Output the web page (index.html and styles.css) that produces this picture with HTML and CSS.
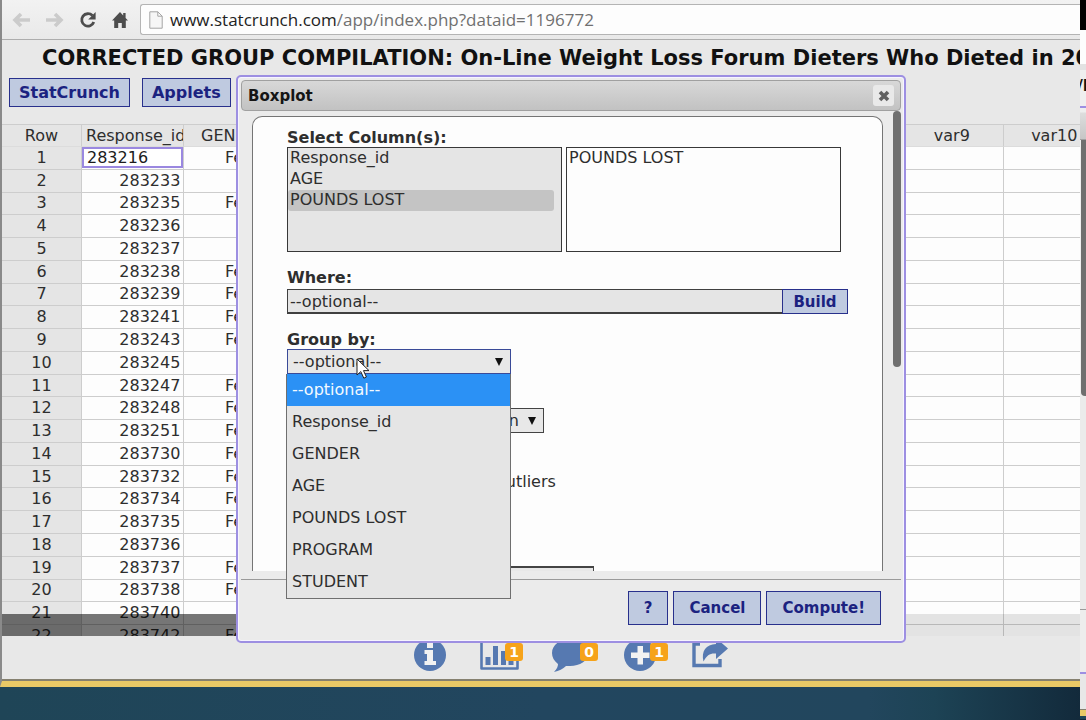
FILE: index.html
```html
<!DOCTYPE html>
<html lang="en">
<head>
<meta charset="utf-8">
<title>StatCrunch</title>
<link rel="stylesheet" href="styles.css">
</head>
<body>
<div class="window">
  <header class="toolbar">
    <button class="nav-btn" aria-label="Back"><svg width="20" height="18" viewBox="0 0 20 18"><path d="M9 3 3 9l6 6M3 9h15" fill="none" stroke="#cbcbcb" stroke-width="3.600"/></svg></button>
    <button class="nav-btn" aria-label="Forward"><svg width="20" height="18" viewBox="0 0 20 18"><path d="M11 3l6 6-6 6M17 9H2" fill="none" stroke="#cbcbcb" stroke-width="3.600"/></svg></button>
    <button class="nav-btn" aria-label="Reload"><svg width="18" height="18" viewBox="0 0 18 18"><path d="M13.4 4.6A6.2 6.2 0 1 0 14.8 11" fill="none" stroke="#4d4d4d" stroke-width="2.8"/><path d="M16.6 1v7.4H9.2z" fill="#4d4d4d"/></svg></button>
    <button class="nav-btn" aria-label="Home"><svg width="16" height="18" viewBox="0 0 16 18"><path d="M8 1 0 9.5h2.2V17h4v-5h3.6v5h4V9.5H16L13.6 7V2h-2.4v2.4z" fill="#4d4d4d"/></svg></button>
    <div class="address">
      <svg width="14" height="18" viewBox="0 0 14 18"><path d="M.8.8h8l4.4 4.4v12H.8zM8.8.8v4.4h4.4" fill="#f6f6f6" stroke="#a4a4a4"/></svg>
      <span class="url"><span class="host">www.statcrunch.com</span>/app/index.php?dataid=1196772</span>
    </div>
  </header>

  <h1 class="title">CORRECTED GROUP COMPILATION: On-Line Weight Loss Forum Dieters Who Dieted in 2012</h1>

  <nav class="menu">
    <button class="btn main">StatCrunch</button>
    <button class="btn main">Applets</button>
  </nav>

  <main class="sheet">
    <table class="grid">
      <colgroup><col class="rowcol"><col span="10"></colgroup>
      <thead><tr><th>Row</th><th class="clip">Response_id</th><th>GENDER</th><th></th><th></th><th></th><th></th><th></th><th></th><th>var9</th><th>var10</th></tr></thead>
      <tbody>
      <tr><th>1</th><td class="active"><input class="cell" aria-label="Response_id, row 1" value="283216"></td><td>Female</td><td></td><td></td><td></td><td></td><td></td><td></td><td></td><td></td></tr>
      <tr><th>2</th><td>283233</td><td></td><td></td><td></td><td></td><td></td><td></td><td></td><td></td><td></td></tr>
      <tr><th>3</th><td>283235</td><td>Female</td><td></td><td></td><td></td><td></td><td></td><td></td><td></td><td></td></tr>
      <tr><th>4</th><td>283236</td><td></td><td></td><td></td><td></td><td></td><td></td><td></td><td></td><td></td></tr>
      <tr><th>5</th><td>283237</td><td></td><td></td><td></td><td></td><td></td><td></td><td></td><td></td><td></td></tr>
      <tr><th>6</th><td>283238</td><td>Female</td><td></td><td></td><td></td><td></td><td></td><td></td><td></td><td></td></tr>
      <tr><th>7</th><td>283239</td><td>Female</td><td></td><td></td><td></td><td></td><td></td><td></td><td></td><td></td></tr>
      <tr><th>8</th><td>283241</td><td>Female</td><td></td><td></td><td></td><td></td><td></td><td></td><td></td><td></td></tr>
      <tr><th>9</th><td>283243</td><td>Female</td><td></td><td></td><td></td><td></td><td></td><td></td><td></td><td></td></tr>
      <tr><th>10</th><td>283245</td><td></td><td></td><td></td><td></td><td></td><td></td><td></td><td></td><td></td></tr>
      <tr><th>11</th><td>283247</td><td>Female</td><td></td><td></td><td></td><td></td><td></td><td></td><td></td><td></td></tr>
      <tr><th>12</th><td>283248</td><td>Female</td><td></td><td></td><td></td><td></td><td></td><td></td><td></td><td></td></tr>
      <tr><th>13</th><td>283251</td><td>Female</td><td></td><td></td><td></td><td></td><td></td><td></td><td></td><td></td></tr>
      <tr><th>14</th><td>283730</td><td>Female</td><td></td><td></td><td></td><td></td><td></td><td></td><td></td><td></td></tr>
      <tr><th>15</th><td>283732</td><td>Female</td><td></td><td></td><td></td><td></td><td></td><td></td><td></td><td></td></tr>
      <tr><th>16</th><td>283734</td><td>Female</td><td></td><td></td><td></td><td></td><td></td><td></td><td></td><td></td></tr>
      <tr><th>17</th><td>283735</td><td>Female</td><td></td><td></td><td></td><td></td><td></td><td></td><td></td><td></td></tr>
      <tr><th>18</th><td>283736</td><td></td><td></td><td></td><td></td><td></td><td></td><td></td><td></td><td></td></tr>
      <tr><th>19</th><td>283737</td><td>Female</td><td></td><td></td><td></td><td></td><td></td><td></td><td></td><td></td></tr>
      <tr><th>20</th><td>283738</td><td>Female</td><td></td><td></td><td></td><td></td><td></td><td></td><td></td><td></td></tr>
      <tr><th>21</th><td>283740</td><td></td><td></td><td></td><td></td><td></td><td></td><td></td><td></td><td></td></tr>
      <tr><th>22</th><td>283742</td><td>Female</td><td></td><td></td><td></td><td></td><td></td><td></td><td></td><td></td></tr>
      </tbody>
    </table>
    <div class="hscroll"><div class="hthumb"></div></div>
  </main>

  <footer class="dock">
    <button class="dock-btn" aria-label="Info"><svg width="40" height="36" viewBox="0 0 40 36"><circle cx="20" cy="18" r="16" fill="#5679b1"/><path d="M17 6h6v5h-6zM14.500 13H23v11h3v4H14.500v-4H17v-7h-2.500z" fill="#f2f2f2"/></svg></button>
    <button class="dock-btn" aria-label="Graphs"><svg width="40" height="36" viewBox="0 0 40 36"><path d="M1.500 2v29.500h36V2" fill="none" stroke="#5679b1" stroke-width="2.600" stroke-linejoin="round"/><path d="M5.500 20h5v8h-5zM13 9h5v19h-5zM21 14h5v14h-5zM28.500 18h5v10h-5z" fill="#5679b1"/></svg><span class="badge">1</span></button>
    <button class="dock-btn" aria-label="Comments"><svg width="40" height="36" viewBox="0 0 40 36"><path d="M20 2c10 0 18 6 18 14S30 29 20 29h-4c-3 3-7 5-12 6 3-3 4-6 4-8-4-3-6-7-6-11C2 8 10 2 20 2z" fill="#5679b1"/></svg><span class="badge far">0</span></button>
    <button class="dock-btn" aria-label="Add"><svg width="40" height="36" viewBox="0 0 40 36"><circle cx="20" cy="18" r="16" fill="#5679b1"/><path d="M17.500 9h5.500v6.500h6.500v5.500H23v6.500h-5.500V21H11v-5.500h6.500z" fill="#f2f2f2"/></svg><span class="badge far">1</span></button>
    <button class="dock-btn" aria-label="Share"><svg width="40" height="36" viewBox="0 0 40 36"><path d="M10 7H4v21.500h26V22" fill="none" stroke="#5679b1" stroke-width="3.400"/><path d="M26 1l12 10.500L26 22v-5.500c-6-.5-9 1.500-12.500 8C11 14 16 7.500 26 7z" fill="#5679b1"/></svg></button>
  </footer>

  <section class="dialog" role="dialog" aria-labelledby="dlg-title">
    <header class="dialog-bar">
      <h2 id="dlg-title" class="dialog-title">Boxplot</h2>
      <button class="close" aria-label="Close"><svg width="12" height="12" viewBox="0 0 12 12"><path d="M2 2l8 8M10 2l-8 8" stroke="#616161" stroke-width="3.600"/></svg></button>
    </header>
    <div class="dialog-body">
      <form class="panel">
        <div class="field">
          <label class="label" for="cols">Select Column(s):</label>
          <div class="lists">
            <select id="cols" class="list shaded" multiple size="5"><option>Response_id</option><option>AGE</option><option selected>POUNDS LOST</option></select>
            <select class="list" aria-label="Selected columns" multiple size="5"><option>POUNDS LOST</option></select>
          </div>
        </div>
        <div class="field">
          <label class="label" for="where">Where:</label>
          <div class="where"><input id="where" class="text" value="--optional--"><button type="button" class="btn build">Build</button></div>
        </div>
        <div class="field">
          <label class="label" for="groupby">Group by:</label>
          <select id="groupby" class="drop focus"><option>--optional--</option></select>
        </div>
        <div class="field plot"><select class="drop wide" aria-label="Plot groups"><option>Plot groups for each column</option></select></div>
        <label class="check"><input type="checkbox" class="tick">Use fences to identify outliers</label>
        <select class="drop last" aria-label="Markers"><option></option></select>
      </form>
      <div class="vtrack"><div class="vthumb"></div></div>
    </div>
    <footer class="dialog-foot">
      <button class="btn big">?</button>
      <button class="btn big">Cancel</button>
      <button class="btn big">Compute!</button>
    </footer>
    <ul class="popup" role="listbox" aria-label="Group by options">
      <li class="opt current" role="option">--optional--</li>
      <li class="opt" role="option">Response_id</li>
      <li class="opt" role="option">GENDER</li>
      <li class="opt" role="option">AGE</li>
      <li class="opt" role="option">POUNDS LOST</li>
      <li class="opt" role="option">PROGRAM</li>
      <li class="opt" role="option">STUDENT</li>
    </ul>
    <svg class="pointer" width="14" height="22" viewBox="0 0 14 22"><path d="M1 1v16l3.800-3.400 3 6.600 2.600-1.200-2.900-6.400H13z" fill="#fff" stroke="#222"/></svg>
  </section>
</div>

<aside class="edge" aria-hidden="true">
  <div class="edge-black"></div>
  <div class="edge-white"></div>
  <div class="edge-head">/l</div>
  <div class="edge-bar"></div>
  <div class="edge-thumb"></div>
  <div class="edge-body"></div>
  <div class="edge-foot"></div>
  <div class="edge-dock"></div>
  <div class="edge-gold"></div>
</aside>
</body>
</html>
```
FILE: styles.css
```css
* { box-sizing: border-box; }

body {
  margin: 0;
  min-height: 100vh;
  display: flex;
  align-items: flex-start;
  overflow: hidden;
  background: linear-gradient(90deg, #1f4557 0%, #22465f 50%, #22465d 80%, #1d4355 86%, #12293a 100%);
  color: #2e2e2e;
  font: 16px/20px "DejaVu Sans", Verdana, sans-serif;
}

button, input, select { font: inherit; color: inherit; margin: 0; }

.window {
  position: relative;
  flex: 1;
  min-width: 0;
  background: #e8e8e8;
  border-left: 2px solid #8a8a8a;
  border-bottom: 6px solid #e9c966;
  overflow: hidden;
}

/* Browser toolbar */
.toolbar {
  display: flex;
  align-items: center;
  height: 40px;
  padding-left: 10px;
  gap: 12px;
  background: linear-gradient(#f2f2f2, #e9e9e9);
  border-bottom: 1px solid #adadad;
}
.nav-btn { display: flex; padding: 0; border: 0; background: none; }
.nav-btn + .nav-btn + .nav-btn { margin-left: 3px; }
.address {
  flex: 1;
  display: flex;
  align-items: center;
  gap: 7px;
  height: 31px;
  padding-left: 8px;
  background: #fdfdfd;
  border: 1px solid #b4b4b4;
  border-right: 0;
  border-radius: 3px 0 0 3px;
}
.url { font: 17px/24px "Open Sans", "Noto Sans", sans-serif; color: #707070; }
.host { color: #222; }

/* Title and menu */
.title {
  margin: 0;
  padding: 4px 0 4px 40px;
  font-size: 21px;
  line-height: 28px;
  color: #111;
  white-space: nowrap;
  overflow: hidden;
}
.menu { display: flex; gap: 12px; padding: 2px 7px 17px; }
.btn {
  height: 29px;
  padding: 0 9px;
  border: 1px solid #28308c;
  background: #bfcae0;
  color: #1b2280;
  font-size: 15px;
  font-weight: bold;
}
.main { font-size: 16px; }

/* Data sheet */
.sheet { position: relative; height: 512px; overflow: hidden; }
.grid {
  table-layout: fixed;
  width: 1104px;
  height: 524px;
  border-collapse: separate;
  border-spacing: 0;
  line-height: 18px;
}
.rowcol { width: 80px; }
.grid thead tr { height: 23px; }
.grid tbody tr { height: 22px; }
.grid th, .grid td {
  padding: 0 3px;
  border: 0 solid #cdcdcd;
  border-width: 0 1px 1px 0;
  white-space: nowrap;
  overflow: hidden;
}
.grid th { font-weight: normal; text-align: center; background: #e5e5e5; }
.grid thead th { border-top-width: 1px; border-bottom-color: #dcdcdc; }
.grid th.clip { text-align: left; padding-left: 4px; }
.grid td { text-align: right; background: #fdfdfd; }
.grid td.active { padding: 0; }
.cell {
  display: block;
  width: 100%;
  height: 21px;
  padding: 0 3px;
  border: 2px solid #9a88e0;
  background: #fff;
  color: #1c1c1c;
}
.hscroll {
  position: absolute;
  left: 0;
  right: 0;
  bottom: 0;
  height: 22px;
  background: rgba(0, 0, 0, .1);
}
.hthumb { width: 60%; height: 100%; background: rgba(0, 0, 0, .48); }

/* Bottom icon dock */
.dock {
  display: flex;
  justify-content: center;
  height: 45px;
  padding-left: 58px;
  border-bottom: 2px solid #85806f;
}
.dock-btn { position: relative; width: 70px; height: 38px; padding: 1px 0; border: 0; background: none; }
.dock-btn svg { display: block; margin: auto; }
.badge {
  position: absolute;
  left: 40px;
  top: 7px;
  width: 18px;
  height: 18px;
  border-radius: 3px;
  background: #f6a31a;
  color: #fff;
  font-size: 14px;
  line-height: 18px;
  font-weight: bold;
}
.far { left: 45px; }

/* Boxplot dialog */
.dialog {
  position: absolute;
  left: 234px;
  top: 75px;
  width: 670px;
  border: 2px solid #9d8fe2;
  border-radius: 5px;
  background: #ebebeb;
  box-shadow: inset 0 0 0 1px #f6f4ff;
  padding: 3px;
}
.dialog-bar {
  display: flex;
  align-items: center;
  justify-content: space-between;
  height: 31px;
  padding: 0 6px;
  border: 1px solid #a0a0a0;
  border-radius: 4px;
  background: linear-gradient(#d8d8d8, #c2c2c2);
}
.dialog-title { margin: 0; font-size: 15px; color: #151515; }
.close {
  display: flex;
  align-items: center;
  justify-content: center;
  width: 21px;
  height: 21px;
  padding: 0;
  border: 0;
  border-radius: 3px;
  background: #e9e9e9;
}
.dialog-body {
  display: flex;
  gap: 10px;
  height: 469px;
  padding: 0 0 8px 11px;
  border-bottom: 1px solid #9a9a9a;
}
.panel {
  flex: 1;
  margin-top: 5px;
  padding: 12px 34px 0;
  border: 1px solid #757575;
  border-bottom: 0;
  border-radius: 10px 10px 0 0;
  background: #fdfdfd;
  overflow: hidden;
}
.vtrack { width: 8px; }
.vthumb { height: 256px; border-radius: 4px; background: #6f6f6f; }
.field { margin-bottom: 17px; }
.label { display: block; height: 18px; line-height: 18px; font-weight: bold; }
.lists { display: flex; gap: 4px; }
.list {
  width: 275px;
  height: 105px;
  padding: 0 7px 0 0;
  border: 1px solid #383838;
  border-radius: 0;
  background: #fdfdfd;
  overflow: hidden;
  outline: 0;
}
.list.shaded { background: #e5e5e5; }
.list option { height: 21px; min-height: 21px; padding: 0 2px; border-radius: 3px; line-height: 21px; }
.list option:checked { background: #c4c4c4 linear-gradient(#c4c4c4, #c4c4c4); color: #2e2e2e; }
.where { display: flex; padding-top: 2px; }
.text {
  width: 495px;
  height: 25px;
  padding: 0 2px;
  border: 1px solid #404040;
  border-right: 0;
  border-bottom-width: 2px;
  background: #e5e5e5;
}
.build { width: 66px; height: 25px; padding: 0; flex: none; }
.drop {
  display: block;
  appearance: none;
  width: 224px;
  height: 25px;
  padding: 0 6px;
  border: 1px solid #444;
  border-radius: 0;
  color: #2e2e2e;
  background-color: #e8e8e8;
  background-image: url("data:image/svg+xml,%3Csvg xmlns='http://www.w3.org/2000/svg' width='8' height='8'%3E%3Cpath d='M0 0h8L4 8z' fill='%23111'/%3E%3C/svg%3E");
  background-repeat: no-repeat;
  background-position: right 7px center;
}
.focus { border-color: #3a4a98; padding-left: 5px; }
.wide { width: 257px; }
.popup {
  position: absolute;
  z-index: 2;
  left: 48px;
  top: 297px;
  width: 225px;
  margin: 0;
  padding: 0;
  list-style: none;
  border: 1px solid #6f6f6f;
  border-top: 0;
  background: #e5e5e5;
}
.opt { padding: 6px 5px; }
.current { background: #2b91f5; color: #f4faff; }
.pointer { position: absolute; z-index: 3; left: 118px; top: 281px; }
.plot { padding-top: 17px; margin-bottom: 39px; }
.check { display: flex; align-items: center; gap: 17px; height: 20px; }
.tick { width: 13px; height: 13px; }
.last { width: 307px; margin-top: 74px; border-top-width: 2px; }

.dialog-foot { display: flex; justify-content: flex-end; gap: 5px; padding: 11px 20px 13px; }
.big { height: 34px; padding: 0 15px; }

/* Sliver of the window behind, at the right edge */
.edge { width: 6px; display: flex; flex-direction: column; background: #efefef; overflow: hidden; }
.edge-black { height: 30px; background: #000; }
.edge-white { height: 40px; background: #fdfdfd; border-bottom: 6px solid #e2e2e2; }
.edge-head { height: 36px; margin-left: -3px; padding-top: 6px; font-weight: bold; color: #151515; white-space: nowrap; }
.edge-bar { height: 34px; border-top: 2px solid #9d8fe2; border-bottom: 1px solid #a0a0a0; background: linear-gradient(#eee 4px, #ddd 5px, #c6c6c6); }
.edge-thumb { height: 256px; margin-left: 1px; border-radius: 0 0 0 4px; background: #6f6f6f; }
.edge-body { height: 214px; background: #ebebeb; border-bottom: 1px solid #9a9a9a; }
.edge-foot { height: 62px; background: #ededed; }
.edge-dock { height: 38px; border-top: 2px solid #9d8fe2; border-bottom: 1px solid #85806f; background: #e8e8e8; }
.edge-gold { height: 9px; background: #e9c966; border-bottom: 3px solid #1f4557; }
```
